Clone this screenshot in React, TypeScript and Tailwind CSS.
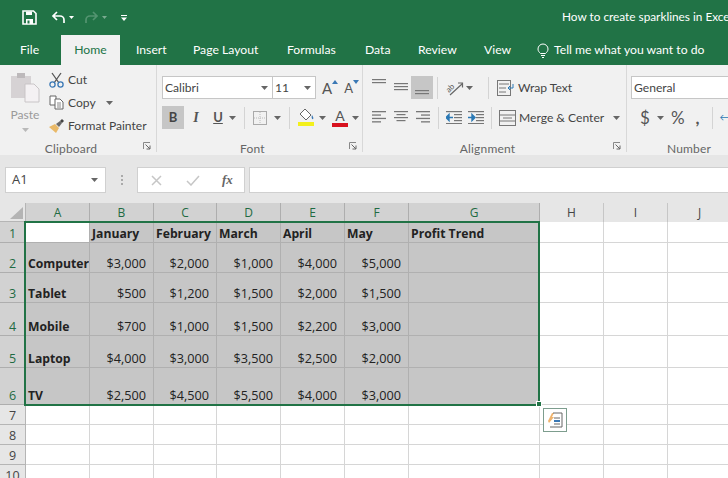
const tabs = [
  { label: "Insert", w: "w-[57px]" },
  { label: "Page Layout", w: "w-[94px]" },
  { label: "Formulas", w: "w-[78px]" },
  { label: "Data", w: "w-[53px]" },
  { label: "Review", w: "w-[66px]" },
  { label: "View", w: "w-[53px]" },
];

const columns = ["A", "B", "C", "D", "E", "F", "G", "H", "I", "J"];
const rowHeights = [21, 30, 30, 33, 32, 37, 20, 20, 20, 20];

const data: string[][] = [
  ["", "January", "February", "March", "April", "May", "Profit Trend"],
  ["Computer", "$3,000", "$2,000", "$1,000", "$4,000", "$5,000", ""],
  ["Tablet", "$500", "$1,200", "$1,500", "$2,000", "$1,500", ""],
  ["Mobile", "$700", "$1,000", "$1,500", "$2,200", "$3,000", ""],
  ["Laptop", "$4,000", "$3,000", "$3,500", "$2,500", "$2,000", ""],
  ["TV", "$2,500", "$4,500", "$5,500", "$4,000", "$3,000", ""],
];

function Caret({ className = "" }: { className?: string }) {
  return (
    <svg width="7" height="4" viewBox="0 0 7 4" className={className}>
      <path d="M0 0h7L3.5 4z" fill="#666" />
    </svg>
  );
}

function Lines({ widths, color = "#777" }: { widths: number[]; color?: string }) {
  return (
    <svg width="14" height={widths.length * 3 + 1} viewBox={`0 0 14 ${widths.length * 3 + 1}`}>
      {widths.map((w, i) => (
        <rect key={i} x={(14 - w) / 2} y={i * 3} width={w} height="1.2" fill={color} />
      ))}
    </svg>
  );
}

function LinesLeft({ flip = false }: { flip?: boolean }) {
  const rows = [14, 9, 14, 9];
  return (
    <svg width="14" height="13" viewBox="0 0 14 13">
      {rows.map((w, i) => (
        <rect key={i} x={flip ? 14 - w : 0} y={i * 3.4} width={w} height="1.3" fill="#777" />
      ))}
    </svg>
  );
}

function Indent({ reverse = false }: { reverse?: boolean }) {
  return (
    <svg width="16" height="13" viewBox="0 0 16 13">
      <path d={reverse ? "M0 6.5h4M4 3.5l3 3-3 3z" : "M3 6.5h4M3 3.5l-3 3 3 3z"} stroke="#2b79b5" strokeWidth="1.4" fill="#2b79b5" />
      {[0, 3, 6, 9, 12].map((y) => (
        <rect key={y} x={y === 0 || y === 12 ? 0 : 8} y={y} width={y === 0 || y === 12 ? 16 : 8} height="1.2" fill="#777" />
      ))}
    </svg>
  );
}

function Sep({ className = "" }: { className?: string }) {
  return <div className={`h-[22px] w-px bg-[#d4d4d4] ${className}`} />;
}

function Launcher() {
  return (
    <svg width="8" height="8" viewBox="0 0 8 8" className="absolute bottom-[2px] right-[5px]">
      <path d="M0.5 7V0.5H7" stroke="#888" fill="none" />
      <path d="M2.5 2.5L7 7M7 3.5V7H3.5" stroke="#666" fill="none" />
    </svg>
  );
}

function GroupLabel({ children }: { children: string }) {
  return <div className="absolute bottom-[-4px] left-0 right-[14px] h-[14px] text-center text-[12px] leading-[14px] tracking-[0.2px] text-[#666]">{children}</div>;
}

function Ribbon() {
  return (
    <div className="flex h-[90px] bg-[#f1f1f1] font-['Lato',sans-serif] text-[12.1px] text-[#444]">
      {/* clipboard */}
      <div className="relative h-[87px] w-[157px] shrink-0 border-r border-[#d8d8d8]">
        <div className="flex">
          <div className="ml-[9px] flex w-[32px] flex-col items-center pt-[7px]">
            <svg width="30" height="31" viewBox="0 0 30 31">
              <rect x="1" y="4" width="20" height="22" fill="#d6d2d4" />
              <rect x="7" y="1" width="8" height="5" fill="#bdb9bb" />
              <path d="M15 12h9l5 5v13H15z" fill="#f4f1f3" stroke="#c9c5c7" />
            </svg>
            <span className="mt-[3px] leading-[18px] text-[#9a9a9a]">Paste</span>
            <Caret className="mt-[4px] opacity-40" />
          </div>
          <div className="ml-[8px] flex flex-col pt-[3px]">
            <div className="flex h-[23px] items-center gap-[4px]">
              <svg width="15" height="16" viewBox="0 0 15 16">
                <path d="M3 1l7 10M12 1L5 11" stroke="#555" strokeWidth="1.3" fill="none" />
                <circle cx="3.5" cy="12.5" r="2.6" stroke="#3a78b5" strokeWidth="1.3" fill="none" />
                <circle cx="11.5" cy="12.5" r="2.6" stroke="#3a78b5" strokeWidth="1.3" fill="none" />
              </svg>
              <span className="pt-[2px]">Cut</span>
            </div>
            <div className="flex h-[23px] items-center gap-[4px]">
              <svg width="15" height="15" viewBox="0 0 15 15">
                <path d="M1 1h6v9H1z" fill="#fff" stroke="#666" />
                <path d="M6 4h5l3 3v7H6z" fill="#fff" stroke="#666" />
                <path d="M8 8h4M8 10h4M8 12h4" stroke="#888" />
              </svg>
              <span className="pt-[2px]">Copy</span>
              <Caret className="ml-[6px]" />
            </div>
            <div className="flex h-[23px] items-center gap-[4px]">
              <svg width="15" height="14" viewBox="0 0 15 14">
                <path d="M0 8l6-3 4 4-3 5z" fill="#e9b968" />
                <path d="M7 5l4-3 2 2-3 4z" fill="#6b6b6b" />
                <path d="M11 2l2-2 2 2-2 2z" fill="#444" />
              </svg>
              <span className="whitespace-nowrap pt-[2px]">Format Painter</span>
            </div>
          </div>
        </div>
        <GroupLabel>Clipboard</GroupLabel>
        <Launcher />
      </div>

      {/* font */}
      <div className="relative h-[87px] w-[206px] shrink-0 border-r border-[#d8d8d8] pl-[5px] pt-[11px]">
        <div className="flex h-[23px] items-center">
          <div className="flex h-[23px] w-[111px] items-center justify-between border border-[#c6c6c6] bg-white pl-[2px] pr-[4px]">
            <span className="pt-[2px]">Calibri</span>
            <Caret />
          </div>
          <div className="-ml-px flex h-[23px] w-[44px] items-center justify-between border border-[#c6c6c6] bg-white pl-[2px] pr-[4px]">
            <span className="pt-[2px]">11</span>
            <Caret />
          </div>
          <div className="ml-[6px] flex items-start">
            <span className="text-[15px] leading-[18px] text-[#555]">A</span>
            <svg width="6" height="4" viewBox="0 0 6 4" className="mt-[1px]">
              <path d="M0 4l3-4 3 4z" fill="#3a78b5" />
            </svg>
          </div>
          <div className="ml-[6px] flex items-start">
            <span className="text-[13px] leading-[18px] text-[#555]">A</span>
            <svg width="6" height="4" viewBox="0 0 6 4" className="mt-[1px]">
              <path d="M0 0h6L3 4z" fill="#3a78b5" />
            </svg>
          </div>
        </div>
        <div className="mt-[7px] flex h-[23px] items-center">
          <div className="flex h-[23px] w-[22px] items-center justify-center bg-[#c6c6c6] text-[13px] font-bold text-[#444]">B</div>
          <span className="ml-[7px] w-[10px] text-center font-['Liberation_Serif',serif] text-[14px] font-bold italic text-[#555]">I</span>
          <span className="ml-[12px] w-[10px] text-center text-[13px] font-bold text-[#555] underline">U</span>
          <Caret className="ml-[6px]" />
          <Sep className="ml-[8px]" />
          <svg width="14" height="14" viewBox="0 0 14 14" className="ml-[8px]">
            <rect x="0.5" y="0.5" width="13" height="13" fill="none" stroke="#aaa" />
            <path d="M7 1v12M1 7h12" stroke="#bbb" strokeDasharray="1 1" />
          </svg>
          <Caret className="ml-[7px]" />
          <Sep className="ml-[8px]" />
          <svg width="17" height="19" viewBox="0 0 17 19" className="ml-[8px]">
            <path d="M7 1l6 6-5 5-6-6z" fill="#fff" stroke="#666" />
            <path d="M14 7c1 2 2 3 1 4s-2-2-1-4z" fill="#3a78b5" />
            <rect x="0" y="14" width="16" height="4" fill="#f3f01c" />
          </svg>
          <Caret className="ml-[4px]" />
          <div className="ml-[6px] flex w-[16px] flex-col items-center">
            <span className="text-[14px] leading-[15px] text-[#555]">A</span>
            <div className="h-[4px] w-[16px] bg-[#d8121f]" />
          </div>
          <Caret className="ml-[4px]" />
        </div>
        <GroupLabel>Font</GroupLabel>
        <Launcher />
      </div>

      {/* alignment */}
      <div className="relative h-[87px] w-[264px] shrink-0 border-r border-[#d8d8d8] pt-[11px]">
        <div className="flex h-[23px] items-center">
          <div className="ml-[9px] flex w-[14px] self-start pt-[3px]">
            <Lines widths={[14, 14]} />
          </div>
          <div className="ml-[8px] flex w-[14px]">
            <Lines widths={[14, 14, 14]} />
          </div>
          <div className="ml-[3px] flex h-[23px] w-[22px] items-end justify-center bg-[#c6c6c6] pb-[2px]">
            <Lines widths={[14, 14]} />
          </div>
          <Sep className="ml-[4px]" />
          <svg width="19" height="18" viewBox="0 0 19 18" className="ml-[7px]">
            <text x="1" y="11" transform="rotate(-45 6 9)" fontSize="8" fill="#555" fontFamily="Lato, sans-serif">ab</text>
            <path d="M5 16L17 5M13 4h4.500v4.500" stroke="#666" strokeWidth="1.2" fill="none" />
          </svg>
          <Caret className="ml-[2px]" />
          <Sep className="ml-[15px]" />
          <svg width="18" height="16" viewBox="0 0 18 16" className="ml-[8px]">
            <rect x="0.5" y="0.5" width="13" height="15" fill="none" stroke="#777" />
            <path d="M2 4h10M2 8h7M2 12h7" stroke="#777" />
            <path d="M16 4v4h-5M11 8l2-2M11 8l2 2" stroke="#2b79b5" fill="none" />
          </svg>
          <span className="ml-[3px] whitespace-nowrap pt-[2px]">Wrap Text</span>
        </div>
        <div className="mt-[7px] flex h-[23px] items-center">
          <div className="ml-[9px]">
            <LinesLeft />
          </div>
          <div className="ml-[8px] flex">
            <Lines widths={[14, 9, 14, 9]} />
          </div>
          <div className="ml-[8px]">
            <LinesLeft flip />
          </div>
          <Sep className="ml-[8px]" />
          <div className="ml-[7px]">
            <Indent />
          </div>
          <div className="ml-[6px]">
            <Indent reverse />
          </div>
          <Sep className="ml-[7px]" />
          <svg width="17" height="16" viewBox="0 0 17 16" className="ml-[7px]">
            <rect x="0.5" y="0.5" width="16" height="15" fill="none" stroke="#777" />
            <path d="M1 5h15M1 11h15M4 8h9" stroke="#777" />
          </svg>
          <span className="ml-[3px] whitespace-nowrap pt-[2px]">Merge &amp; Center</span>
          <Caret className="ml-[9px]" />
        </div>
        <GroupLabel>Alignment</GroupLabel>
        <Launcher />
      </div>

      {/* number */}
      <div className="relative h-[87px] w-[140px] shrink-0 pl-[4px] pt-[11px]">
        <div className="flex h-[23px] w-[120px] items-center border border-[#c6c6c6] bg-white pl-[2px] pt-[2px]">General</div>
        <div className="mt-[7px] flex h-[23px] items-center">
          <span className="ml-[9px] text-[17px] text-[#555]">$</span>
          <Caret className="ml-[7px]" />
          <span className="ml-[7px] text-[17px] text-[#555]">%</span>
          <span className="ml-[11px] text-[17px] font-bold leading-[17px] text-[#555]">,</span>
          <Sep className="ml-[12px]" />
          <span className="ml-[7px] whitespace-nowrap text-[10px] text-[#2b79b5]">←.0</span>
        </div>
        <div className="absolute bottom-[-4px] left-0 h-[14px] w-[124px] text-center text-[12px] leading-[14px] tracking-[0.2px] text-[#666]">Number</div>
      </div>
    </div>
  );
}

function Sheet() {
  return (
    <div className="relative w-[760px]">
      <div className="grid grid-cols-[26px_64px_64px_63px_64px_64px_64px_131px_64px_64px_64px]">
        <div className="flex h-[19px] items-end justify-end border-b border-r border-[#b5b5b5] bg-[#e6e6e6] pb-[2px] pr-[2px]">
          <svg width="13" height="12" viewBox="0 0 13 12">
            <path d="M13 0v12H0z" fill="#b4b4b4" />
          </svg>
        </div>
        {columns.map((c, i) => (
          <div
            key={c}
            className={`flex h-[19px] items-center justify-center border-r text-[12px] ${
              i < 7 ? "border-[#aeaeae] bg-[#d2d2d2] text-[#1f6b42]" : "border-[#c6c6c6] bg-[#e6e6e6] text-[#444]"
            }`}
          >
            {c}
          </div>
        ))}
      </div>
      {rowHeights.map((h, r) => (
        <div
          key={r}
          className="grid grid-cols-[26px_64px_64px_63px_64px_64px_64px_131px_64px_64px_64px]"
          style={{ height: h }}
        >
          <div
            className={`flex items-end justify-center border-b border-r text-[12.5px] leading-[17px] ${
              r < 6 ? "border-[#aeaeae] bg-[#d2d2d2] text-[#1f6b42]" : "border-[#b5b5b5] bg-[#e6e6e6] text-[#444]"
            }`}
          >
            {r + 1}
          </div>
          {columns.map((c, i) => {
            const selected = r < 6 && i < 7;
            const text = r < 6 && i < 7 ? data[r][i] : "";
            const firstCell = r === 0 && i === 0;
            const bold = r === 0 || i === 0;
            return (
              <div
                key={c}
                className={`flex items-end overflow-hidden whitespace-nowrap border-b border-r pl-[2px] leading-[17px] text-[#222] ${
                  firstCell
                    ? "border-[#b0b0b0] bg-white"
                    : selected
                      ? "border-[#b0b0b0] bg-[#c6c6c6]"
                      : "border-[#d6d6d6] bg-white"
                } ${bold ? "justify-start text-[12.2px] font-bold" : "justify-end pr-[7px] text-[12.7px]"}`}
              >
                {text}
              </div>
            );
          })}
        </div>
      ))}
      {/* selection outline */}
      <div className="absolute left-[24px] top-[18px] h-[185px] w-[516px] border-2 border-[#217346]" />
      <div className="absolute left-[536px] top-[198px] h-[6px] w-[6px] border border-white bg-[#217346]" />
      <div className="absolute left-[543px] top-[205px] flex h-[24px] w-[24px] items-center justify-center border border-[#7d9d8e] bg-white">
        <svg width="16" height="16" viewBox="0 0 16 16">
          <path d="M1 9l4-8h2L5 5h2l-5 6z" fill="#f0b46e" />
          <path d="M6 1h9v14H3" fill="none" stroke="#666" />
          <path d="M7 6h6M7 12h6" stroke="#666" />
          <path d="M7 9h6" stroke="#3a78b5" strokeWidth="2" />
        </svg>
      </div>
    </div>
  );
}

export default function App() {
  return (
    <div className="h-[478px] w-[728px] overflow-hidden bg-[#e6e6e6] font-['Open_Sans',sans-serif]">
      {/* title bar */}
      <div className="flex h-[35px] items-center bg-[#217346] text-white">
        <div className="flex w-[562px] shrink-0 items-center pl-[22px]">
          <svg width="15" height="15" viewBox="0 0 15 15">
            <path d="M1 1h10.500L14 3.500V14H1z" fill="none" stroke="#fff" strokeWidth="1.6" />
            <path d="M4 1.500h6v3.500H4zM4 9h7v5H4z" fill="#fff" />
            <rect x="5.500" y="10.500" width="2" height="3" fill="#217346" />
          </svg>
          <svg width="15" height="13" viewBox="0 0 15 13" className="ml-[14px]">
            <path d="M6 1L2 5l4 4M2 5h7a4 4 0 0 1 4 4v3" fill="none" stroke="#fff" strokeWidth="1.7" />
          </svg>
          <svg width="5" height="3" viewBox="0 0 5 3" className="ml-[3px]">
            <path d="M0 0h5L2.500 3z" fill="#fff" />
          </svg>
          <svg width="15" height="13" viewBox="0 0 15 13" className="ml-[10px] opacity-40">
            <path d="M9 1l4 4-4 4M13 5H6a4 4 0 0 0-4 4v3" fill="none" stroke="#9fc6b0" strokeWidth="1.7" />
          </svg>
          <svg width="5" height="3" viewBox="0 0 5 3" className="ml-[3px] opacity-40">
            <path d="M0 0h5L2.500 3z" fill="#fff" />
          </svg>
          <svg width="6" height="6" viewBox="0 0 6 6" className="ml-[14px]">
            <path d="M0 0h6v1H0zM0 2.500h6L3 6z" fill="#fff" />
          </svg>
        </div>
        <span className="-mt-[2px] whitespace-nowrap font-['Lato',sans-serif] text-[11.8px]">How to create sparklines in Excel</span>
      </div>

      {/* tabs */}
      <div className="flex h-[30px] items-center bg-[#217346] font-['Lato',sans-serif] text-[12.2px] text-white">
        <div className="w-[61px] shrink-0 pl-[20px]">File</div>
        <div className="flex h-full w-[59px] shrink-0 items-center justify-center bg-[#f1f1f1] text-[#217346]">Home</div>
        <div className="w-[16px] shrink-0" />
        {tabs.map((t) => (
          <div key={t.label} className={`shrink-0 whitespace-nowrap ${t.w}`}>
            {t.label}
          </div>
        ))}
        <svg width="12" height="15" viewBox="0 0 12 15" className="mr-[5px] shrink-0">
          <path d="M3.500 10.500C2 9 1 8 1 6a5 5 0 0 1 10 0c0 2-1 3-2.500 4.500zM4 12.500h4M5 14.500h2" fill="none" stroke="#fff" />
        </svg>
        <span className="whitespace-nowrap">Tell me what you want to do</span>
      </div>

      <Ribbon />

      {/* formula bar */}
      <div className="ml-[5px] mt-[12px] flex h-[26px]">
        <div className="flex w-[101px] shrink-0 items-center justify-between border border-[#d0d0d0] bg-white pl-[6px] pr-[7px] text-[13px] text-[#444]">
          A1
          <Caret />
        </div>
        <div className="flex w-[31px] shrink-0 flex-col items-center justify-center gap-[2px]">
          <div className="h-[2px] w-[2px] bg-[#aaa]" />
          <div className="h-[2px] w-[2px] bg-[#aaa]" />
          <div className="h-[2px] w-[2px] bg-[#aaa]" />
        </div>
        <div className="flex w-[108px] shrink-0 items-center border border-[#d0d0d0] bg-white">
          <svg width="11" height="11" viewBox="0 0 11 11" className="ml-[13px]">
            <path d="M1 1l9 9M10 1l-9 9" stroke="#c6c6c6" strokeWidth="1.5" />
          </svg>
          <svg width="14" height="11" viewBox="0 0 14 11" className="ml-[24px]">
            <path d="M1 6l4 4 8-9" stroke="#c6c6c6" strokeWidth="1.5" fill="none" />
          </svg>
          <span className="ml-[22px] font-['Liberation_Serif',serif] text-[13px] font-bold italic text-[#666]">fx</span>
        </div>
        <div className="ml-[4px] w-[500px] shrink-0 border border-[#d0d0d0] bg-white" />
      </div>

      <div className="mt-[10px]">
        <Sheet />
      </div>
    </div>
  );
}
